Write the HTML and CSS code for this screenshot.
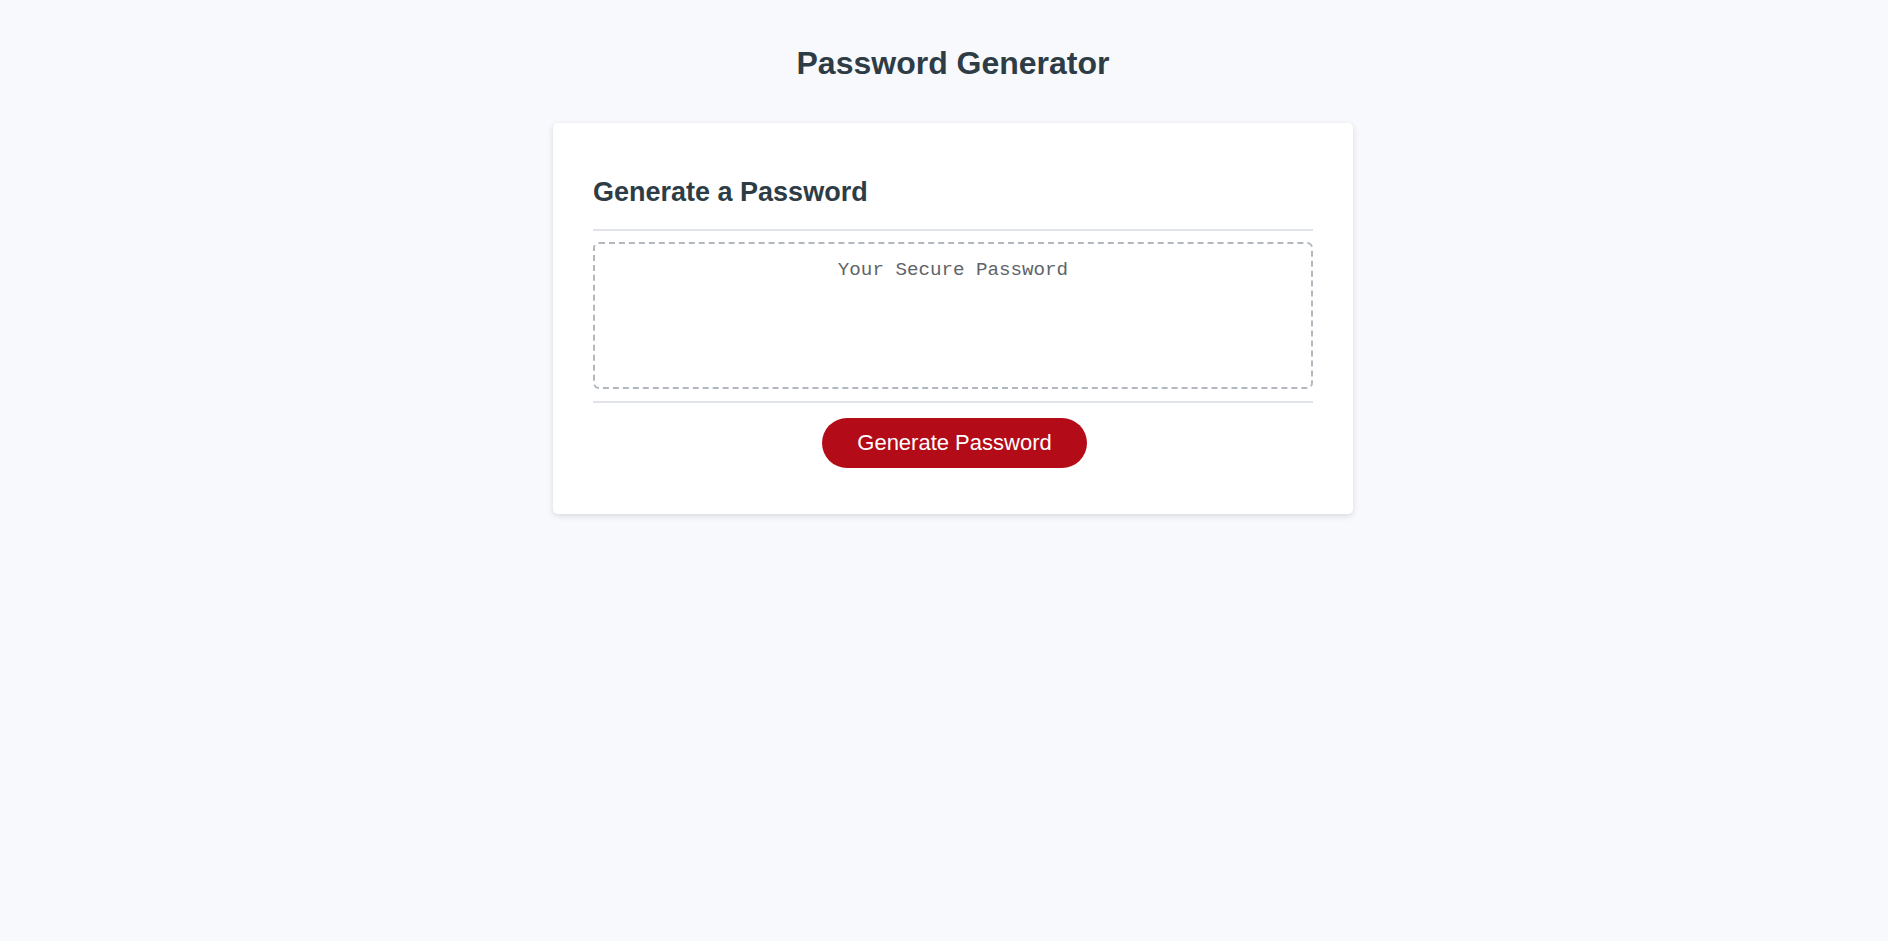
FILE: index.html
```html
<!DOCTYPE html>
<html lang="en">
<head>
<meta charset="utf-8">
<title>Password Generator</title>
<link rel="stylesheet" href="styles.css">
</head>
<body>
<div class="page">
  <h1 class="title">Password Generator</h1>
  <div class="card">
    <h2 class="card-title">Generate a Password</h2>
    <div class="card-body">
      <div class="password-box">Your Secure Password</div>
    </div>
    <div class="card-footer">
      <button class="btn" type="button">Generate Password</button>
    </div>
  </div>
</div>
</body>
</html>
```
FILE: styles.css
```css
html, body {
  margin: 0;
  padding: 0;
}
body {
  background: #f8f9fd;
  font-family: "Liberation Sans", Arial, sans-serif;
  color: #2e3c45;
  min-height: 941px;
}
.page {
  padding-left: 18px;
  display: flex;
  flex-direction: column;
  align-items: center;
}
.title {
  margin: 45px 0 41px;
  font-size: 32px;
  line-height: 37px;
  font-weight: 700;
  color: #2e3c45;
}
.card {
  width: 720px;
  padding: 53px 40px 46px;
  background: #ffffff;
  border-radius: 5px;
  box-shadow: 0 2px 6px rgba(0, 0, 0, 0.13);
}
.card-title {
  margin: 0;
  font-size: 27px;
  line-height: 32px;
  font-weight: 700;
  color: #2e3c45;
  padding-bottom: 21px;
  border-bottom: 2px solid #e1e4e8;
}
.card-body {
  padding: 11px 0 12px;
  border-bottom: 2px solid #e1e4e8;
}
.password-box {
  height: 128px;
  padding: 15px 0 0;
  border: 2px dashed #b3b8bf;
  border-radius: 6px;
  font-family: "Liberation Mono", "Courier New", monospace;
  font-size: 19.2px;
  color: #606468;
  text-align: center;
}
.card-footer {
  display: flex;
  justify-content: center;
  padding: 15px 0 0 3px;
}
.btn {
  height: 50px;
  padding: 0 35px;
  border: none;
  border-radius: 25px;
  background: #b30b17;
  color: #ffffff;
  font-family: "Liberation Sans", Arial, sans-serif;
  font-size: 22px;
  cursor: pointer;
}
```
